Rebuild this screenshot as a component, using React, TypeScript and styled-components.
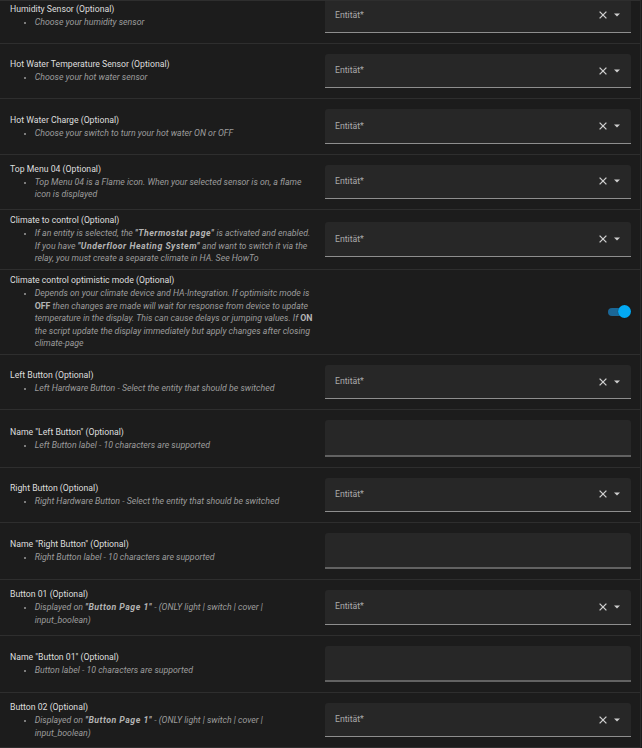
import React from 'react'
import styled, { createGlobalStyle } from 'styled-components'

type FieldKind = 'entity' | 'text' | 'toggle'

interface SettingRow {
  title: string
  description: React.ReactNode
  field: FieldKind
}

interface StrongProps {
  upright?: boolean
}

const GlobalStyle = createGlobalStyle`
  html, body {
    margin: 0;
    padding: 0;
    background: #1c1c1c;
  }
  body {
    font-family: Roboto, "Noto Sans", sans-serif;
  }
`

const Viewport = styled.div`
  width: 640px;
  height: 747px;
  overflow: hidden;
  border-top: 1px solid #2e2e2e;
  border-right: 1px solid #2a2a2a;
  background: #1c1c1c;
`

const List = styled.div`
  display: flex;
  flex-direction: column;
  margin-top: -12.4px;
`

const Row = styled.div`
  display: flex;
  align-items: center;
  padding: 0 9px 0 10px;
  border-bottom: 1px solid #2e2e2e;
  min-height: 54.4px;
`

const TextBlock = styled.div`
  flex: 1;
  min-width: 0;
  padding: 4px 11px 4px 0;
`

const Title = styled.div`
  font-size: 8.7px;
  line-height: 13px;
  color: #dedede;
`

const Description = styled.ul`
  margin: 0;
  padding-left: 24.7px;
  font-size: 8.75px;
  line-height: 12.6px;
  font-style: italic;
  color: #9c9c9c;

  li::marker {
    font-size: 8px;
  }
`

const Strong = styled.strong<StrongProps>`
  font-weight: 700;
  font-style: ${props => props.upright ? 'normal' : 'italic'};
  letter-spacing: ${props => props.upright ? '0' : '0.5px'};
  color: #b4b4b4;
`

const Control = styled.div`
  width: 306px;
  flex-shrink: 0;
  display: flex;
  justify-content: flex-end;
  padding: 10px 0;
`

const Field = styled.div<{ kind: FieldKind }>`
  width: 100%;
  box-sizing: border-box;
  height: ${props => props.kind === 'entity' ? '34.4px' : '36.3px'};
  display: flex;
  align-items: center;
  padding: 0 11px 0 10px;
  background: #272727;
  border-radius: 3px 3px 0 0;
  border-bottom: ${props => props.kind === 'entity' ? '1px solid #8e8e8e' : '2px solid #626262'};
`

const Label = styled.span`
  flex: 1;
  font-size: 8.7px;
  color: #ababab;
  padding-bottom: 1px;
`

const Icons = styled.div`
  display: flex;
  align-items: center;
  gap: 7px;
`

const Toggle = styled.div`
  display: flex;
  align-items: center;
  height: 14px;
`

const Track = styled.div`
  width: 19px;
  height: 8px;
  border-radius: 4px;
  background: #1b6796;
`

const Knob = styled.div`
  width: 13px;
  height: 13px;
  border-radius: 50%;
  background: #03a9f4;
  margin-left: -9px;
  box-shadow: 0 0 1px rgba(0, 0, 0, 0.6);
`

const ClearIcon = () => (
  <svg width="8" height="8" viewBox="0 0 8 8">
    <path d="M0.6 0.6L7.4 7.4M7.4 0.6L0.6 7.4" stroke="#cfcfcf" strokeWidth="1.3" />
  </svg>
)

const ArrowIcon = () => (
  <svg width="6" height="4" viewBox="0 0 6 4">
    <path d="M0 0.5H6L3 3.5Z" fill="#cfcfcf" />
  </svg>
)

const rows: SettingRow[] = [
  { title: 'Humidity Sensor (Optional)', description: 'Choose your humidity sensor', field: 'entity' },
  { title: 'Hot Water Temperature Sensor (Optional)', description: 'Choose your hot water sensor', field: 'entity' },
  { title: 'Hot Water Charge (Optional)', description: 'Choose your switch to turn your hot water ON or OFF', field: 'entity' },
  {
    title: 'Top Menu 04 (Optional)',
    description: 'Top Menu 04 is a Flame icon. When your selected sensor is on, a flame icon is displayed',
    field: 'entity'
  },
  {
    title: 'Climate to control (Optional)',
    description: (
      <>
        If an entity is selected, the <Strong>"Thermostat page"</Strong> is activated and enabled. If you have{' '}
        <Strong>"Underfloor Heating System"</Strong> and want to switch it via the relay, you must create a separate
        climate in HA. See HowTo
      </>
    ),
    field: 'entity'
  },
  {
    title: 'Climate control optimistic mode (Optional)',
    description: (
      <>
        Depends on your climate device and HA-Integration. If optimisitc mode is <Strong upright>OFF</Strong> then
        changes are made will wait for response from device to update temperature in the display. This can cause delays
        or jumping values. If <Strong upright>ON</Strong> the script update the display immediately but apply changes
        after closing climate-page
      </>
    ),
    field: 'toggle'
  },
  { title: 'Left Button (Optional)', description: 'Left Hardware Button - Select the entity that should be switched', field: 'entity' },
  { title: 'Name "Left Button" (Optional)', description: 'Left Button label - 10 characters are supported', field: 'text' },
  { title: 'Right Button (Optional)', description: 'Right Hardware Button - Select the entity that should be switched', field: 'entity' },
  { title: 'Name "Right Button" (Optional)', description: 'Right Button label - 10 characters are supported', field: 'text' },
  {
    title: 'Button 01 (Optional)',
    description: <>Displayed on <Strong>"Button Page 1"</Strong> - (ONLY light | switch | cover | input_boolean)</>,
    field: 'entity'
  },
  { title: 'Name "Button 01" (Optional)', description: 'Button label - 10 characters are supported', field: 'text' },
  {
    title: 'Button 02 (Optional)',
    description: <>Displayed on <Strong>"Button Page 1"</Strong> - (ONLY light | switch | cover | input_boolean)</>,
    field: 'entity'
  }
]

const renderControl = (kind: FieldKind) => {
  if (kind === 'toggle') {
    return (
      <Toggle>
        <Track />
        <Knob />
      </Toggle>
    )
  }

  return (
    <Field kind={kind}>
      {kind === 'entity' && (
        <>
          <Label>Entität*</Label>
          <Icons>
            <ClearIcon />
            <ArrowIcon />
          </Icons>
        </>
      )}
    </Field>
  )
}

const App = () => {
  return (
    <>
      <GlobalStyle />
      <Viewport>
        <List>
          {rows.map((e, i) => (
            <Row key={i}>
              <TextBlock>
                <Title>{e.title}</Title>
                <Description>
                  <li>{e.description}</li>
                </Description>
              </TextBlock>
              <Control>{renderControl(e.field)}</Control>
            </Row>
          ))}
        </List>
      </Viewport>
    </>
  )
}

export default App
